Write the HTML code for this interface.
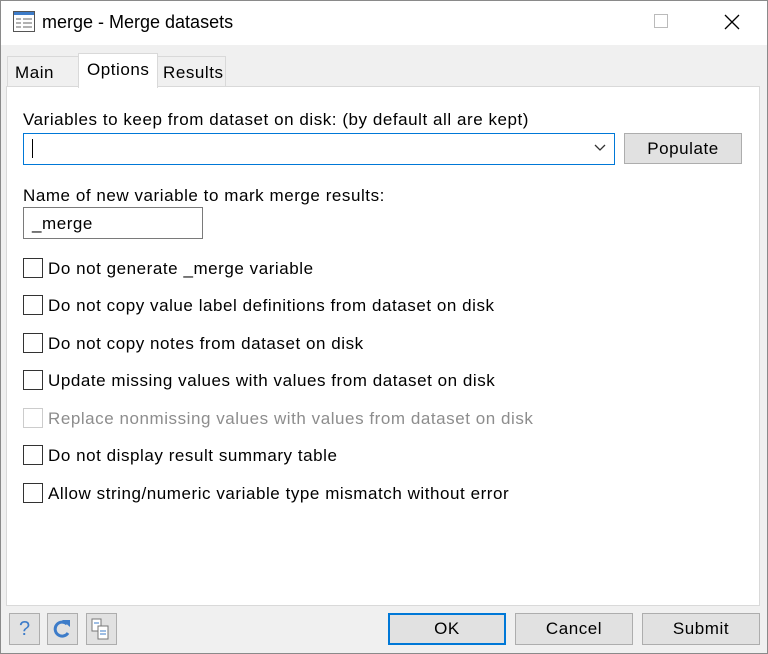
<!DOCTYPE html>
<html><head><style>
*{box-sizing:border-box;margin:0;padding:0}
body{width:768px;height:654px;position:relative;overflow:hidden;background:#f0f0f0;font-family:"Liberation Sans",sans-serif;font-size:17px;color:#000}
.abs{position:absolute}
#frame{left:0;top:0;width:768px;height:654px;border:1px solid #8a8a8a}
#title{left:1px;top:1px;width:766px;height:44px;background:#fff}
.cb{position:absolute;left:23px;width:20px;height:20px;border:1px solid #333;background:#fff}
.lbl{position:absolute;left:48px;letter-spacing:0.55px}
.sp{letter-spacing:0.55px}
.btn{position:absolute;top:613px;height:32px;background:#e1e1e1;border:1px solid #adadad;text-align:center;line-height:30px}
.ib{position:absolute;top:613px;width:31px;height:32px;background:#e1e1e1;border:1px solid #adadad}
</style></head><body>
<div class="abs" id="frame"></div>
<div class="abs" id="title"></div>
<svg class="abs" style="left:13px;top:11px" width="22" height="22"><rect x="0.5" y="0.5" width="21" height="20" fill="#fff" stroke="#555"/><rect x="1" y="1" width="20" height="3" fill="#3d7cc9"/><g stroke="#666"><line x1="3" y1="8" x2="8" y2="8"/><line x1="10" y1="8" x2="19" y2="8"/><line x1="3" y1="12" x2="8" y2="12"/><line x1="10" y1="12" x2="19" y2="12"/><line x1="3" y1="16" x2="8" y2="16"/><line x1="10" y1="16" x2="19" y2="16"/></g></svg>
<div class="abs" style="left:42px;top:12px;font-size:18px">merge - Merge datasets</div>
<div class="abs" style="left:654px;top:14px;width:14px;height:14px;border:1px solid #bbb"></div>
<svg class="abs" style="left:724px;top:14px" width="16" height="16"><path d="M1 1L15 15M15 1L1 15" stroke="#000" stroke-width="1.3"/></svg>
<!-- tabs -->
<div class="abs sp" style="left:7px;top:56px;width:72px;height:31px;border:1px solid #d9d9d9;border-bottom:none;background:#f0f0f0;padding:6px 0 0 7px">Main</div>
<div class="abs sp" style="left:157px;top:56px;width:69px;height:31px;border:1px solid #d9d9d9;border-bottom:none;background:#f0f0f0;padding:6px 0 0 5px">Results</div>
<div class="abs" style="left:6px;top:86px;width:754px;height:520px;background:#fff;border:1px solid #d9d9d9"></div>
<div class="abs sp" style="left:78px;top:53px;width:80px;height:35px;border:1px solid #d9d9d9;border-bottom:none;background:#fff;padding:6px 0 0 8px">Options</div>
<div class="abs sp" style="left:23px;top:110px">Variables to keep from dataset on disk: (by default all are kept)</div>
<div class="abs" style="left:23px;top:133px;width:592px;height:32px;border:1px solid #0078d7;background:#fff"></div>
<div class="abs" style="left:32px;top:139px;width:1px;height:19px;background:#000"></div>
<svg class="abs" style="left:594px;top:144px" width="12" height="8"><polyline points="1,1 6,6 11,1" fill="none" stroke="#333" stroke-width="1.3"/></svg>
<div class="abs sp" style="left:624px;top:133px;width:118px;height:31px;background:#e1e1e1;border:1px solid #adadad;text-align:center;line-height:30px">Populate</div>
<div class="abs sp" style="left:23px;top:186px">Name of new variable to mark merge results:</div>
<div class="abs sp" style="left:23px;top:207px;width:180px;height:32px;border:1px solid #7a7a7a;background:#fff;padding:6px 0 0 8px">_merge</div>
<div class="cb" style="top:258px"></div><div class="lbl" style="top:259px">Do not generate _merge variable</div>
<div class="cb" style="top:295px"></div><div class="lbl" style="top:296px">Do not copy value label definitions from dataset on disk</div>
<div class="cb" style="top:333px"></div><div class="lbl" style="top:334px">Do not copy notes from dataset on disk</div>
<div class="cb" style="top:370px"></div><div class="lbl" style="top:371px">Update missing values with values from dataset on disk</div>
<div class="cb" style="top:408px;border-color:#ccc"></div><div class="lbl" style="top:409px;color:#8d8d8d">Replace nonmissing values with values from dataset on disk</div>
<div class="cb" style="top:445px"></div><div class="lbl" style="top:446px">Do not display result summary table</div>
<div class="cb" style="top:483px"></div><div class="lbl" style="top:484px">Allow string/numeric variable type mismatch without error</div>
<!-- bottom -->
<div class="ib" style="left:9px;color:#3d7cc9;text-align:center;line-height:30px;font-size:20px">?</div>
<div class="ib" style="left:47px"><svg width="29" height="30"><path d="M19 10 A7 7 0 1 0 20 19" fill="none" stroke="#3d7cc9" stroke-width="3"/><polygon points="14,6 22,6 22,13" fill="#3d7cc9"/></svg></div>
<div class="ib" style="left:86px"><svg width="29" height="30"><rect x="5" y="5" width="9" height="12" fill="#fff" stroke="#777"/><rect x="11" y="12" width="10" height="13" fill="#fff" stroke="#777"/><g stroke="#3d7cc9"><line x1="7" y1="9" x2="12" y2="9"/><line x1="13" y1="17" x2="19" y2="17"/><line x1="13" y1="20" x2="19" y2="20"/></g></svg></div>
<div class="btn sp" style="left:388px;width:118px;border:2px solid #0078d7;line-height:28px">OK</div>
<div class="btn sp" style="left:515px;width:118px">Cancel</div>
<div class="btn sp" style="left:642px;width:118px">Submit</div>
</body></html>
